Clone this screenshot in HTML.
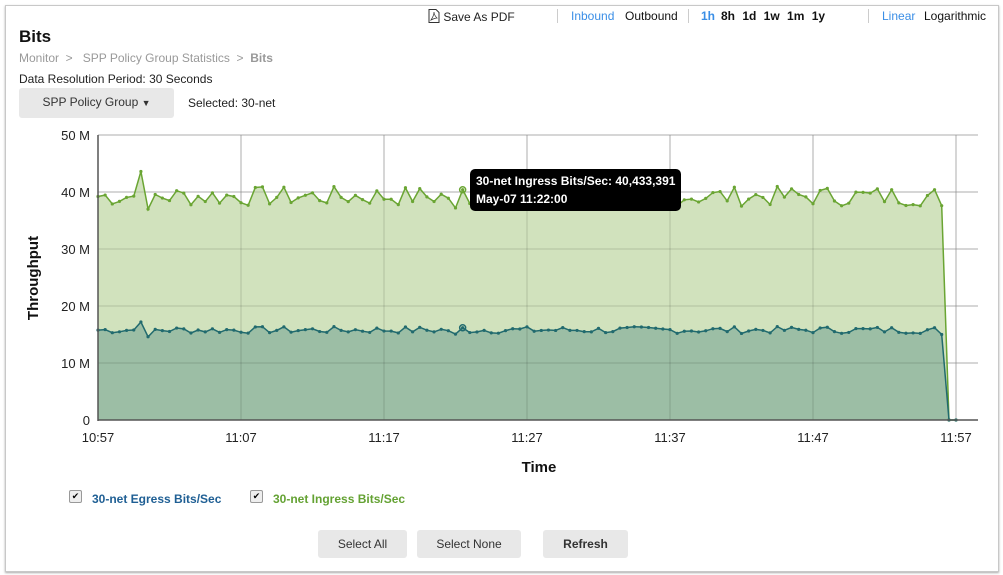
<!DOCTYPE html>
<html><head><meta charset="utf-8"><style>
body{margin:0;width:1003px;height:575px;background:#fff;font-family:"Liberation Sans",Arial,sans-serif;position:relative;overflow:hidden}
.frame{position:absolute;left:5px;top:5px;width:992px;height:565px;border:1px solid #c8c8c8;box-shadow:0 1px 2px #aaa}
.a{position:absolute;white-space:nowrap}
.btn{position:absolute;background:#e8e8e8;border-radius:3px;font-size:12px;color:#333;text-align:center}
.sep{position:absolute;top:9px;width:1px;height:14px;background:#ccc}
</style></head><body>
<div class="frame"></div>
<div class="a" style="left:428px;top:9px;font-size:12px;color:#222"><svg width="12" height="14" viewBox="0 0 12 14" style="vertical-align:-2px"><path d="M1 .5h7l3 3v10H1z" fill="#fff" stroke="#333"/><path d="M3 11c2-3 3-6 3-8 0 2 1 4 3 6-2 0-4 1-6 2z" fill="none" stroke="#333" stroke-width=".7"/></svg> Save As PDF</div>
<div class="sep" style="left:557px"></div>
<div class="a" style="left:571px;top:9px;font-size:12px;color:#3a8ee6">Inbound</div>
<div class="a" style="left:625px;top:9px;font-size:12px;color:#111">Outbound</div>
<div class="sep" style="left:688px"></div>
<div class="a" style="left:701px;top:9px;font-size:12px;font-weight:bold;color:#3a8ee6">1h</div>
<div class="a" style="left:721px;top:9px;font-size:12px;font-weight:bold;color:#111;word-spacing:4px">8h 1d 1w 1m 1y</div>
<div class="sep" style="left:868px"></div>
<div class="a" style="left:882px;top:9px;font-size:12px;color:#3a8ee6">Linear</div>
<div class="a" style="left:924px;top:9px;font-size:12px;color:#111">Logarithmic</div>
<div class="a" style="left:19px;top:27px;font-size:17px;font-weight:bold;color:#111">Bits</div>
<div class="a" style="left:19px;top:51px;font-size:12px;color:#999">Monitor &nbsp;&gt;&nbsp;&nbsp; SPP Policy Group Statistics &nbsp;&gt;&nbsp; <b>Bits</b></div>
<div class="a" style="left:19px;top:72px;font-size:12px;color:#222">Data Resolution Period: 30 Seconds</div>
<div class="btn" style="left:19px;top:88px;width:155px;height:30px;line-height:29px">SPP Policy Group <span style="font-size:9px">▼</span></div>
<div class="a" style="left:188px;top:96px;font-size:12px;color:#222">Selected: 30-net</div>
<svg id="c" class="a" style="left:0;top:0" width="1003" height="575"></svg>
<div class="a" style="left:470px;top:169px;width:211px;height:42px;background:#000;border-radius:5px;color:#fff;font-size:12px;font-weight:bold;line-height:18px;padding:3px 0 0 6px;box-sizing:border-box">30-net Ingress Bits/Sec: 40,433,391<br>May-07 11:22:00</div>
<div class="a" style="left:69px;top:490px;width:11px;height:11px;border:1px solid #999;background:#eee;font-size:9px;line-height:11px;text-align:center;border-radius:2px">✔</div>
<div class="a" style="left:92px;top:492px;font-size:12px;font-weight:bold;color:#1f5f94">30-net Egress Bits/Sec</div>
<div class="a" style="left:250px;top:490px;width:11px;height:11px;border:1px solid #999;background:#eee;font-size:9px;line-height:11px;text-align:center;border-radius:2px">✔</div>
<div class="a" style="left:273px;top:492px;font-size:12px;font-weight:bold;color:#64a233">30-net Ingress Bits/Sec</div>
<div class="btn" style="left:318px;top:530px;width:89px;height:28px;line-height:28px">Select All</div>
<div class="btn" style="left:417px;top:530px;width:104px;height:28px;line-height:28px">Select None</div>
<div class="btn" style="left:543px;top:530px;width:85px;height:28px;line-height:28px;font-weight:bold">Refresh</div>
<script>
var s='',X0=98,Y0=420,k=5.7;
for(var i=0;i<=5;i++){var y=Y0-i*57;s+='<line x1="98" x2="978" y1="'+y+'" y2="'+y+'" stroke="#ccc"/>';s+='<text x="90" y="'+(y+5)+'" font-size="13" text-anchor="end" fill="#222">'+(i?i*10+' M':'0')+'</text>';}
var t=['10:57','11:07','11:17','11:27','11:37','11:47','11:57'];
for(i=0;i<7;i++){var x=98+i*143;if(i)s+='<line x1="'+x+'" x2="'+x+'" y1="135" y2="420" stroke="#ccc"/>';s+='<text x="'+x+'" y="442" font-size="13" text-anchor="middle" fill="#222">'+t[i]+'</text>';}
var g=[],b=[],seed=7;function r(){seed=(seed*9301+49297)%233280;return seed/233280;}
var n=119;
for(i=0;i<n;i++){var v=37.5+r()*3.5;if(i==6)v=43.6;if(i==7)v=37;if(i==51)v=40.4;if(i==50)v=37.2;var bv=15+(v-37)*0.35;if(i==6)bv=17.2;if(i==7)bv=14.6;
var x=98+i*7.15;g.push([x,Y0-v*k]);b.push([x,Y0-bv*k]);}
g[n-1][1]=Y0-37.6*k;b[n-1][1]=Y0-15*k;
g.push([949,420],[956,420]);b.push([949,420],[956,420]);
function P(a){return a.map(function(p){return p[0].toFixed(1)+','+p[1].toFixed(1)}).join(' ');}
var gs='<polygon points="98,420 '+P(g)+'" fill="#d1e2bd"/><polygon points="98,420 '+P(b)+'" fill="#9cbea5"/>';
var gl='<polyline points="'+P(g)+'" fill="none" stroke="#6aa533" stroke-width="1.5"/><polyline points="'+P(b)+'" fill="none" stroke="#216a6e" stroke-width="1.5"/>';
var d='';g.forEach(function(p){d+='<circle cx="'+p[0]+'" cy="'+p[1]+'" r="1.6" fill="#6aa533"/>'});b.forEach(function(p){d+='<circle cx="'+p[0]+'" cy="'+p[1]+'" r="1.6" fill="#216a6e"/>'});
var grid='';for(i=1;i<=5;i++){var y=Y0-i*57;grid+='<line x1="98" x2="978" y1="'+y+'" y2="'+y+'" stroke="rgba(0,0,0,.15)"/>';}
for(i=1;i<7;i++){var x=98+i*143;grid+='<line x1="'+x+'" x2="'+x+'" y1="135" y2="420" stroke="rgba(0,0,0,.15)"/>';}
var axis='<line x1="98" x2="98" y1="135" y2="421" stroke="#555" stroke-width="1.5"/><line x1="98" x2="978" y1="420" y2="420" stroke="#555" stroke-width="1.5"/>';
var lbl='<text x="38" y="278" font-size="15" font-weight="bold" transform="rotate(-90 38 278)" text-anchor="middle" fill="#111">Throughput</text><text x="539" y="472" font-size="15" font-weight="bold" text-anchor="middle" fill="#111">Time</text>';
var hl='<circle cx="'+g[51][0]+'" cy="'+g[51][1]+'" r="3" fill="none" stroke="#6aa533" stroke-width="1.5"/><circle cx="'+b[51][0]+'" cy="'+b[51][1]+'" r="3" fill="none" stroke="#216a6e" stroke-width="1.5"/>';
document.getElementById('c').innerHTML=s+gs+grid+gl+d+hl+axis+lbl;
</script>
</body></html>
